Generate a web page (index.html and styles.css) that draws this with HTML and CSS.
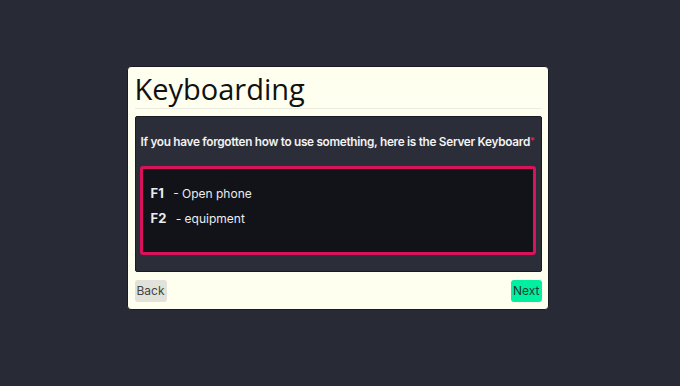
FILE: index.html
```html
<html><head><title>Keyboarding</title>
<link rel="stylesheet" href="styles.css">
</head>
<body>
<div class="dialog">
  <h1 class="dialog-title">Keyboarding</h1>
  <div class="panel">
    <p class="panel-text">If you have forgotten how to use something, here is the Server Keyboard<span class="req">*</span></p>
    <div class="keys">
      <div class="key-row"><b class="key">F1</b> - Open phone</div>
      <div class="key-row"><b class="key">F2</b> - equipment</div>
    </div>
  </div>
  <div class="actions">
    <button class="btn btn-back">Back</button>
    <button class="btn btn-next">Next</button>
  </div>
</div>
</body></html>
```

FILE: styles.css
```css
body {
  background-color: #282a36;
  margin: 0;
  padding: 0;
  height: 100vh;
  display: flex;
  justify-content: center;
  align-items: center;
  font-family: 'Inter', 'Noto Sans', sans-serif;
}
.dialog {
  width: 407px;
  padding: 0 6px 7px 7px;
  background: #fffff0;
  border: 1px solid #1a1b22;
  border-radius: 4px;
  margin-right: 5px;
  margin-bottom: 11px;
}
.dialog-title {
  font-family: 'Open Sans', 'DejaVu Sans', sans-serif;
  font-weight: 400;
  font-size: 29px;
  line-height: 36px;
  margin: 4px 0 0 0;
  padding-bottom: 1px;
  color: #111;
  border-bottom: 1px solid #ecece0;
}
.panel {
  margin-top: 7px;
  background: #2b2d38;
  border: 1px solid #1a1b22;
  border-radius: 2px;
  padding: 10px 5px 16px 4px;
}
.panel-text {
  color: #f2f2f2;
  font-size: 11.8px;
  font-weight: 600;
  letter-spacing: -0.3px;
  white-space: nowrap;
  margin: 8px 0 17px 1px;
}
.req {
  color: #e0245e;
  font-size: 9px;
  vertical-align: top;
}
.keys {
  background: #111319;
  border: 3px solid #d8125b;
  border-radius: 3px;
  padding: 12px 8px 24px;
  height: 47px;
}
.key-row {
  color: #ececec;
  font-size: 12px;
  line-height: 24px;
}
.key {
  font-weight: 700;
  font-size: 13px;
  margin-right: 6px;
}
.actions {
  display: flex;
  justify-content: space-between;
  margin-top: 8px;
}
.btn {
  font-family: 'Inter', 'Noto Sans', sans-serif;
  font-size: 12px;
  height: 22px;
  padding: 0 2px;
  border: none;
  border-radius: 3px;
  color: #444;
}
.btn-back {
  background: #e2e2da;
}
.btn-next {
  background: #00f0a0;
  color: #1f3b33;
}
```
